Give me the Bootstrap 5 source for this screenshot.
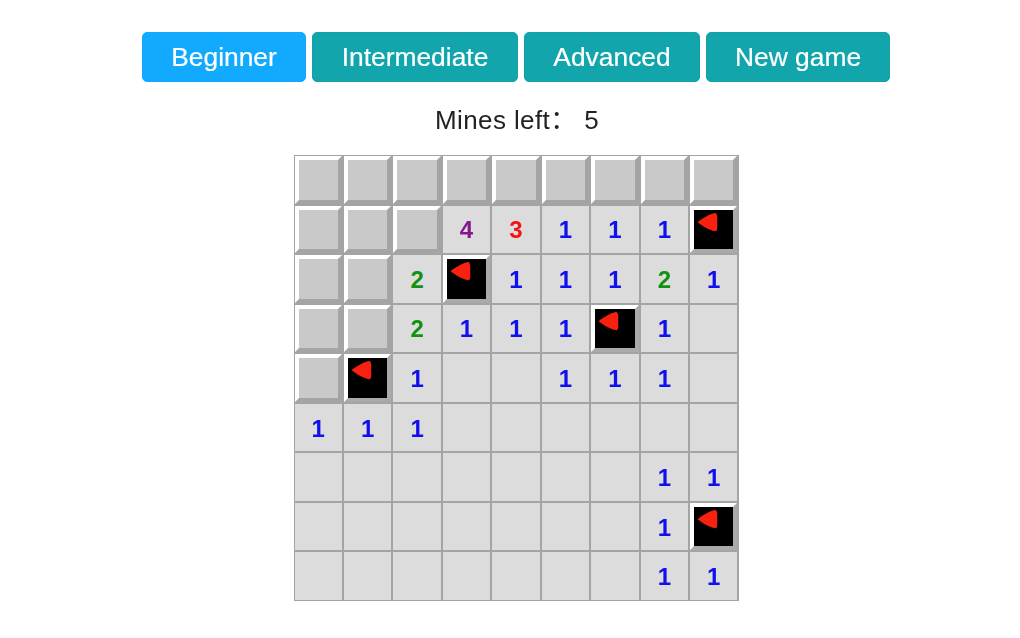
<!DOCTYPE html>
<html lang="en">
<head>
<meta charset="utf-8">
<title>Minesweeper</title>
<link rel="stylesheet" href="https://cdn.jsdelivr.net/npm/bootstrap@5.3.0/dist/css/bootstrap.min.css">
<style>
body{background:#fff;font-family:"Liberation Sans","Noto Sans CJK SC",sans-serif;}
.game-wrap{padding-top:32px;padding-left:11px;filter:blur(.35px);}
.lvl-bar{gap:6px;margin-left:1px;}
.lvl-btn{height:50px;padding:0;font-size:26.4px;line-height:1;color:#fff;border:1px solid #14a0a8;border-radius:5px;background:#12a5ac;-webkit-text-stroke:.2px #fff;}
.lvl-btn:hover,.lvl-btn:active{background:#12a5ac;color:#fff;border-color:#14a0a8;}
.lvl-btn.on,.lvl-btn.on:hover{background:#11aaff;border-color:#11aaff;}
.w1{width:164px}.w2{width:206px}.w3{width:176px}.w4{width:184px}
.mines-info{font-size:26px;line-height:30px;color:#222;margin-top:23px;margin-bottom:20px;letter-spacing:.4px;margin-left:3px;}
.mine-board{display:grid;grid-template-columns:repeat(9,1fr);grid-template-rows:repeat(9,1fr);gap:2px;padding:1px;background:#a4a4a4;width:445px;height:446px;margin-left:1px;}
.sq{background:#dcdcdc;display:flex;align-items:center;justify-content:center;font-weight:700;font-size:24px;line-height:1;padding-top:2px;font-family:"Liberation Sans",sans-serif;}
.shut{background:#c9c9c9;border-style:solid;border-width:4px;border-color:#fff #a4a4a4 #a4a4a4 #fff;padding:0;}
.mine{background:#000;border-style:solid;border-width:4px;border-color:#fff #aaa #aaa #fff;padding:0;}
.mine svg{display:block;width:100%;height:100%;}
.n1{color:#1010ee}.n2{color:#129212}.n3{color:#f51414}.n4{color:#86188c}
</style>
</head>
<body>
<main class="game-wrap d-flex flex-column align-items-center">
  <div class="lvl-bar d-flex justify-content-center">
    <button type="button" class="btn lvl-btn on w1">Beginner</button>
    <button type="button" class="btn lvl-btn w2">Intermediate</button>
    <button type="button" class="btn lvl-btn w3">Advanced</button>
    <button type="button" class="btn lvl-btn w4">New game</button>
  </div>
  <div class="mines-info text-center">Mines left： 5</div>
  <div class="mine-board">
    <div class="sq shut"></div><div class="sq shut"></div><div class="sq shut"></div><div class="sq shut"></div><div class="sq shut"></div><div class="sq shut"></div><div class="sq shut"></div><div class="sq shut"></div><div class="sq shut"></div>

    <div class="sq shut"></div><div class="sq shut"></div><div class="sq shut"></div><div class="sq n4">4</div><div class="sq n3">3</div><div class="sq n1">1</div><div class="sq n1">1</div><div class="sq n1">1</div><div class="sq mine"><svg viewBox="0 0 39 39"><path d="M3.5 12 C9 8 15 4 21 3 Q23 3.5 23 8 L23 17 Q23 21 21 21 C15 20 9 16 3.5 12Z" fill="#f8200e"/></svg></div>

    <div class="sq shut"></div><div class="sq shut"></div><div class="sq n2">2</div><div class="sq mine"><svg viewBox="0 0 39 39"><path d="M3.5 12 C9 8 15 4 21 3 Q23 3.5 23 8 L23 17 Q23 21 21 21 C15 20 9 16 3.5 12Z" fill="#f8200e"/></svg></div><div class="sq n1">1</div><div class="sq n1">1</div><div class="sq n1">1</div><div class="sq n2">2</div><div class="sq n1">1</div>

    <div class="sq shut"></div><div class="sq shut"></div><div class="sq n2">2</div><div class="sq n1">1</div><div class="sq n1">1</div><div class="sq n1">1</div><div class="sq mine"><svg viewBox="0 0 39 39"><path d="M3.5 12 C9 8 15 4 21 3 Q23 3.5 23 8 L23 17 Q23 21 21 21 C15 20 9 16 3.5 12Z" fill="#f8200e"/></svg></div><div class="sq n1">1</div><div class="sq"></div>

    <div class="sq shut"></div><div class="sq mine"><svg viewBox="0 0 39 39"><path d="M3.5 12 C9 8 15 4 21 3 Q23 3.5 23 8 L23 17 Q23 21 21 21 C15 20 9 16 3.5 12Z" fill="#f8200e"/></svg></div><div class="sq n1">1</div><div class="sq"></div><div class="sq"></div><div class="sq n1">1</div><div class="sq n1">1</div><div class="sq n1">1</div><div class="sq"></div>

    <div class="sq n1">1</div><div class="sq n1">1</div><div class="sq n1">1</div><div class="sq"></div><div class="sq"></div><div class="sq"></div><div class="sq"></div><div class="sq"></div><div class="sq"></div>

    <div class="sq"></div><div class="sq"></div><div class="sq"></div><div class="sq"></div><div class="sq"></div><div class="sq"></div><div class="sq"></div><div class="sq n1">1</div><div class="sq n1">1</div>

    <div class="sq"></div><div class="sq"></div><div class="sq"></div><div class="sq"></div><div class="sq"></div><div class="sq"></div><div class="sq"></div><div class="sq n1">1</div><div class="sq mine"><svg viewBox="0 0 39 39"><path d="M3.5 12 C9 8 15 4 21 3 Q23 3.5 23 8 L23 17 Q23 21 21 21 C15 20 9 16 3.5 12Z" fill="#f8200e"/></svg></div>

    <div class="sq"></div><div class="sq"></div><div class="sq"></div><div class="sq"></div><div class="sq"></div><div class="sq"></div><div class="sq"></div><div class="sq n1">1</div><div class="sq n1">1</div>
  </div>
</main>
<script src="https://cdn.jsdelivr.net/npm/bootstrap@5.3.0/dist/js/bootstrap.bundle.min.js"></script>
</body>
</html>
